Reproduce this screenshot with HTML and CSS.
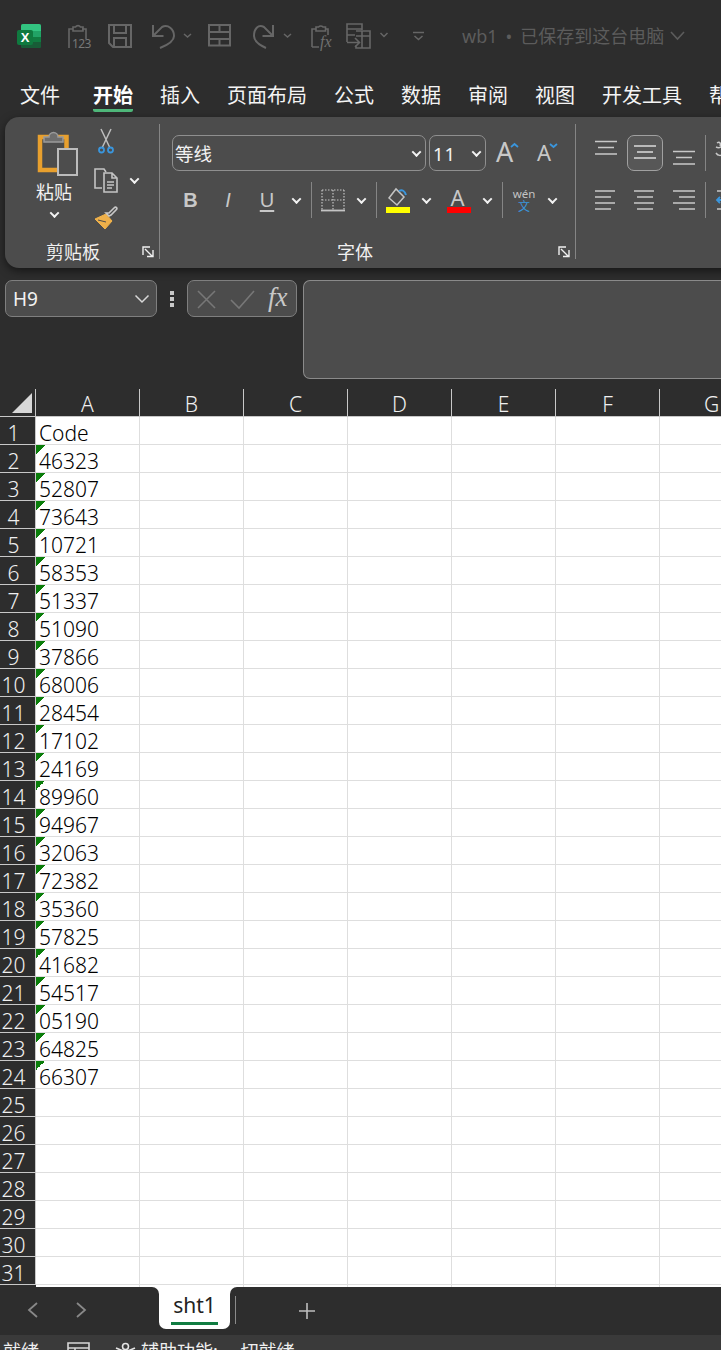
FILE: index.html
```html
<!DOCTYPE html>
<html lang="zh-CN">
<head>
<meta charset="utf-8">
<title>wb1 - Excel</title>
<link rel="stylesheet" href="styles.css">
</head>
<body>
<div class="app">
  <header class="titlebar">
    <svg class="qat" width="51" height="48" viewBox="17 12 51 48">
      <rect x="21" y="24" width="20" height="24" rx="2" fill="#107c41"/>
      <path d="M21 26a2 2 0 0 1 2-2h16a2 2 0 0 1 2 2v5H21z" fill="#33c481"/>
      <rect x="31" y="31" width="10" height="6" fill="#21a366"/>
      <path d="M21 42h20v4a2 2 0 0 1-2 2H23a2 2 0 0 1-2-2z" fill="#185c37"/>
      <rect x="17" y="30" width="16" height="15" rx="2" fill="#0f7a3f"/>
      <text x="25" y="42" class="logo-x">X</text>
    </svg>
    <svg class="qat" width="40" height="48" viewBox="68 12 40 48" fill="none" stroke="#666" stroke-width="1.6">
      <path d="M69 48V29h4M82 29h4v10M73 27h2.500a3 3 0 0 1 5 0h2.500v4H73z"/>
      <text x="72" y="48" class="qat-num">123</text>
    </svg>
    <svg class="qat" width="44" height="48" viewBox="108 12 44 48" fill="none" stroke="#666" stroke-width="2">
      <path d="M109 25h22v22h-18l-4-4zM114 25v8h12v-8M114 47v-9h12v9"/>
    </svg>
    <svg class="qat" width="56" height="48" viewBox="152 12 56 48" fill="none" stroke="#666" stroke-width="2">
      <path d="M153 25v11h10.500M153 36l9-9c6-3 12 2 12 9 0 4-4 8-14 12"/>
      <path d="M184 34l3.500 3 3.500-3" stroke-width="1.500"/>
    </svg>
    <svg class="qat" width="45" height="48" viewBox="208 12 45 48" fill="none" stroke="#666" stroke-width="2">
      <path d="M209 25h21v20.500h-21zM209 32h21M209 39h21M219.500 25v7M219.500 39v6.500"/>
    </svg>
    <svg class="qat" width="58" height="48" viewBox="253 12 58 48" fill="none" stroke="#666" stroke-width="2">
      <path d="M273 25v11h-10.500M273 36l-9-9c-6-3-10 2-10 9 0 4 3 8 12 12"/>
      <path d="M284 34l3.500 3 3.500-3" stroke-width="1.500"/>
    </svg>
    <svg class="qat" width="35" height="48" viewBox="311 12 35 48" fill="none" stroke="#666" stroke-width="1.600">
      <path d="M312 47V29h4M325 29h3v6M316 27h2.500a3 3 0 0 1 4.500 0h2.500v4h-9.500zM312 47h7"/>
      <text x="320" y="47" class="qat-fx">fx</text>
    </svg>
    <svg class="qat" width="59" height="48" viewBox="346 12 59 48" fill="none" stroke="#666" stroke-width="1.600">
      <path d="M362 30v-6h-15v18M347 29h15M347 35h8"/>
      <path d="M356 31h14v17h-14v-3M356 36h14M362 31v17M347 42.500h12M355 38l4.500 4.500-4.500 4.500"/>
      <path d="M380.500 33l3.500 3.500 3.500-3.500" stroke-width="1.500"/>
    </svg>
    <svg class="qat" width="57" height="48" viewBox="405 12 57 48" fill="none" stroke="#666" stroke-width="1.500">
      <path d="M413 32.500h11M414.500 36l4 3.500 4-3.500"/>
    </svg>
    <span class="doc-title">wb1<span class="doc-dot">•</span>已保存到这台电脑</span>
    <svg class="doc-chev" width="18" height="12" viewBox="0 0 18 12" fill="none" stroke="#5c5c5c" stroke-width="1.600"><path d="M2 2l6.500 7L15 2"/></svg>
  </header>

  <nav class="tabs">
    <span class="tab">文件</span>
    <span class="tab tab-active">开始</span>
    <span class="tab">插入</span>
    <span class="tab">页面布局</span>
    <span class="tab">公式</span>
    <span class="tab">数据</span>
    <span class="tab">审阅</span>
    <span class="tab">视图</span>
    <span class="tab">开发工具</span>
    <span class="tab">帮助</span>
  </nav>

  <section class="ribbon">
    <div class="group group-clip">
      <div class="clip-body">
        <div class="paste-col">
          <svg width="48" height="48" viewBox="30 128 48 48" fill="none">
            <path d="M66.500 148v-11H40v33h17" stroke="#e8a02e" stroke-width="4.500"/>
            <path d="M44 142v-5h5a4.500 4.500 0 0 1 9 0h5v5z" fill="#6e6e6e" stroke="#9a9a9a" stroke-width="1.500"/>
            <rect x="58" y="149" width="19" height="26" fill="#4d4d4d" stroke="#bcbcbc" stroke-width="2"/>
          </svg>
          <span class="paste-label">粘贴</span>
          <i class="chev chev-paste"></i>
        </div>
        <div class="clip-tools">
          <svg width="38" height="28" viewBox="88 128 38 28" fill="none">
            <path d="M102 148l9-19M110 148l-9-19" stroke="#bdbdbd" stroke-width="1.500"/>
            <circle cx="101.500" cy="150" r="2.500" stroke="#3a96dd" stroke-width="1.800"/>
            <circle cx="110.500" cy="150" r="2.500" stroke="#3a96dd" stroke-width="1.800"/>
          </svg>
          <div class="tool-row">
            <svg width="38" height="28" viewBox="88 166 38 28" fill="none" stroke="#c4c4c4" stroke-width="1.600">
              <path d="M102 188h-7v-19h9l2 3"/>
              <path d="M104 173h8l5 5v14h-13zM112 173v5h5M107 182h7M107 185h7M107 188h5"/>
            </svg>
            <i class="chev chev-copy"></i>
          </div>
          <svg width="38" height="28" viewBox="88 204 38 28" fill="none">
            <path d="M95 219l11-5 6 7-7 8z" fill="#eeb04a" stroke="#f0b24a" stroke-width="1"/>
            <path d="M98 220l8 2" stroke="#4c4c4c" stroke-width="1"/>
            <path d="M106 213l3 3 2-1 5-5c2-2 0-4-2-2l-5 5z" stroke="#c8c8c8" stroke-width="1.600"/>
          </svg>
        </div>
      </div>
      <div class="group-label label-clip">
        <span></span>
        <span>剪贴板</span>
        <svg class="launcher" width="12" height="12" viewBox="0 0 12 12" fill="none" stroke="#f0f0f0" stroke-width="1.400"><path d="M8 1H1v8M3 3l7 7M5 10.500h6V4"/></svg>
      </div>
    </div>
    <div class="group-sep"></div>

    <div class="group group-font">
      <div class="font-row">
        <div class="combo combo-name"><span>等线</span><i class="chev"></i></div>
        <div class="combo combo-size"><span>11</span><i class="chev"></i></div>
        <svg width="44" height="36" viewBox="486 135 44 36" fill="none">
          <text x="496" y="162" class="grow-a">A</text>
          <path d="M511 147l3.500-3 3.500 3" stroke="#3a96dd" stroke-width="1.800"/>
        </svg>
        <svg width="45" height="36" viewBox="530 135 45 36" fill="none">
          <text x="537" y="161" class="shrink-a">A</text>
          <path d="M550 144l3.500 3 3.500-3" stroke="#3a96dd" stroke-width="1.800"/>
        </svg>
      </div>
      <div class="font-row font-row-2">
        <span class="fmt w37 fmt-b">B</span>
        <span class="fmt w38 fmt-i">I</span>
        <span class="fmt w40 fmt-u">U</span>
        <span class="slot w18"><i class="chev"></i></span>
        <div class="mini-sep sep-l6"></div>
        <svg width="42" height="36" viewBox="312 182 42 36" fill="none" stroke="#c4c4c4">
          <path d="M322 190h22M322 200h22M322 190v20M333 190v20M344 190v20" stroke-width="1.200" stroke-dasharray="1.500 1.500"/>
          <path d="M321 210.500h24" stroke-width="1.800"/>
        </svg>
        <span class="slot w14"><i class="chev"></i></span>
        <div class="mini-sep sep-l8"></div>
        <svg width="42" height="36" viewBox="377 182 42 36" fill="none">
          <path d="M389 198l7-9 8 8-7 8z" stroke="#c4c4c4" stroke-width="1.500"/>
          <path d="M399 191c3-2 6 0 7 4" stroke="#3a96dd" stroke-width="2"/>
          <rect x="386" y="207" width="24" height="6" fill="#ffff00"/>
        </svg>
        <span class="slot w14"><i class="chev"></i></span>
        <svg width="47" height="36" viewBox="433 182 47 36" fill="none">
          <text x="450.500" y="206" class="color-a">A</text>
          <rect x="447" y="207" width="24" height="6" fill="#ff0000"/>
        </svg>
        <span class="slot w14"><i class="chev"></i></span>
        <div class="mini-sep sep-l8"></div>
        <div class="phon w42"><span class="phon-top">wén</span><span class="phon-bot">文</span></div>
        <span class="slot w14"><i class="chev"></i></span>
      </div>
      <div class="group-label label-font">
        <span></span>
        <span>字体</span>
        <svg class="launcher" width="12" height="12" viewBox="0 0 12 12" fill="none" stroke="#f0f0f0" stroke-width="1.400"><path d="M8 1H1v8M3 3l7 7M5 10.500h6V4"/></svg>
      </div>
    </div>
    <div class="group-sep"></div>

    <div class="group group-align">
      <div class="font-row">
        <svg width="51" height="36" viewBox="576 135 51 36" fill="none" stroke="#c8c8c8" stroke-width="1.600">
          <path d="M595 141.500h22M598 147.500h16M595 154h22"/>
        </svg>
        <div class="align-on">
          <svg width="34" height="34" viewBox="628 136 34 34" fill="none" stroke="#dcdcdc" stroke-width="1.600">
            <path d="M634 146h22M637 152h16M634 158h22"/>
          </svg>
        </div>
        <svg width="42" height="36" viewBox="663 135 42 36" fill="none" stroke="#c8c8c8" stroke-width="1.600">
          <path d="M673 151.500h22M676 157.500h16M673 164h22"/>
        </svg>
        <div class="mini-sep"></div>
        <svg width="20" height="36" viewBox="706 135 20 36" fill="none">
          <path d="M717 143c3-2 4 1 3 3M716 147c2 1 4 1 6-1M716 153c2 3 5 3 7 1" stroke="#c8c8c8" stroke-width="1.500"/>
        </svg>
      </div>
      <div class="font-row font-row-2">
        <svg width="39" height="36" viewBox="576 182 39 36" fill="none" stroke="#c8c8c8" stroke-width="1.600">
          <path d="M595 191h22M595 197h16M595 203h22M595 209h16"/>
        </svg>
        <svg width="39" height="36" viewBox="615 182 39 36" fill="none" stroke="#c8c8c8" stroke-width="1.600">
          <path d="M634 191h22M637 197h16M634 203h22M637 209h16"/>
        </svg>
        <svg width="51" height="36" viewBox="654 182 51 36" fill="none" stroke="#c8c8c8" stroke-width="1.600">
          <path d="M673 191h22M679 197h16M673 203h22M679 209h16"/>
        </svg>
        <div class="mini-sep"></div>
        <svg width="20" height="36" viewBox="706 182 20 36" fill="none">
          <path d="M722 200h-5M720 197l-3 3 3 3" stroke="#3a96dd" stroke-width="1.800"/>
          <path d="M717 191h6M717 209h6" stroke="#c8c8c8" stroke-width="1.600"/>
        </svg>
      </div>
    </div>
  </section>

  <section class="formula">
    <div class="namebox"><span>H9</span>
      <svg width="16" height="10" viewBox="0 0 16 10" fill="none" stroke="#d8d8d8" stroke-width="1.500"><path d="M1.500 1.500L8 8l6.500-6.500"/></svg>
    </div>
    <div class="grip"><i></i><i></i><i></i></div>
    <div class="fxbox">
      <svg width="108" height="35" viewBox="188 281 108 35" fill="none" stroke="#777" stroke-width="1.600">
        <path d="M198 291l17 17M215 291l-17 17M231 300l8 8 15-17"/>
        <text x="268" y="306" class="fx-text">fx</text>
      </svg>
    </div>
    <div class="formula-input"></div>
  </section>

  <main class="sheet">
    <div class="colheads">
      <div class="corner"><svg width="20" height="20" viewBox="0 0 20 20"><path d="M20 0v20H0z" fill="#d8d8d8"/></svg></div>
      <div class="colh">A</div><div class="colh">B</div><div class="colh">C</div><div class="colh">D</div><div class="colh">E</div><div class="colh">F</div><div class="colh">G</div>
    </div>
    <div class="row"><div class="rh">1</div><div class="cell">Code</div><div class="rest"></div></div>
    <div class="row"><div class="rh">2</div><div class="cell flag">46323</div><div class="rest"></div></div>
    <div class="row"><div class="rh">3</div><div class="cell flag">52807</div><div class="rest"></div></div>
    <div class="row"><div class="rh">4</div><div class="cell flag">73643</div><div class="rest"></div></div>
    <div class="row"><div class="rh">5</div><div class="cell flag">10721</div><div class="rest"></div></div>
    <div class="row"><div class="rh">6</div><div class="cell flag">58353</div><div class="rest"></div></div>
    <div class="row"><div class="rh">7</div><div class="cell flag">51337</div><div class="rest"></div></div>
    <div class="row"><div class="rh">8</div><div class="cell flag">51090</div><div class="rest"></div></div>
    <div class="row"><div class="rh">9</div><div class="cell flag">37866</div><div class="rest"></div></div>
    <div class="row"><div class="rh">10</div><div class="cell flag">68006</div><div class="rest"></div></div>
    <div class="row"><div class="rh">11</div><div class="cell flag">28454</div><div class="rest"></div></div>
    <div class="row"><div class="rh">12</div><div class="cell flag">17102</div><div class="rest"></div></div>
    <div class="row"><div class="rh">13</div><div class="cell flag">24169</div><div class="rest"></div></div>
    <div class="row"><div class="rh">14</div><div class="cell flag">89960</div><div class="rest"></div></div>
    <div class="row"><div class="rh">15</div><div class="cell flag">94967</div><div class="rest"></div></div>
    <div class="row"><div class="rh">16</div><div class="cell flag">32063</div><div class="rest"></div></div>
    <div class="row"><div class="rh">17</div><div class="cell flag">72382</div><div class="rest"></div></div>
    <div class="row"><div class="rh">18</div><div class="cell flag">35360</div><div class="rest"></div></div>
    <div class="row"><div class="rh">19</div><div class="cell flag">57825</div><div class="rest"></div></div>
    <div class="row"><div class="rh">20</div><div class="cell flag">41682</div><div class="rest"></div></div>
    <div class="row"><div class="rh">21</div><div class="cell flag">54517</div><div class="rest"></div></div>
    <div class="row"><div class="rh">22</div><div class="cell flag">05190</div><div class="rest"></div></div>
    <div class="row"><div class="rh">23</div><div class="cell flag">64825</div><div class="rest"></div></div>
    <div class="row"><div class="rh">24</div><div class="cell flag">66307</div><div class="rest"></div></div>
    <div class="row"><div class="rh">25</div><div class="cell"></div><div class="rest"></div></div>
    <div class="row"><div class="rh">26</div><div class="cell"></div><div class="rest"></div></div>
    <div class="row"><div class="rh">27</div><div class="cell"></div><div class="rest"></div></div>
    <div class="row"><div class="rh">28</div><div class="cell"></div><div class="rest"></div></div>
    <div class="row"><div class="rh">29</div><div class="cell"></div><div class="rest"></div></div>
    <div class="row"><div class="rh">30</div><div class="cell"></div><div class="rest"></div></div>
    <div class="row"><div class="rh">31</div><div class="cell"></div><div class="rest"></div></div>
    <div class="row-end"></div>
  </main>

  <section class="sheetbar">
    <div class="sheet-nav">
      <svg width="159" height="48" viewBox="0 1287 159 48" fill="none" stroke="#888" stroke-width="1.800">
        <path d="M37 1303l-8 7 8 7"/>
        <path d="M77 1303l8 7-8 7"/>
      </svg>
    </div>
    <div class="sheet-tab"><span>sht1</span></div>
    <div class="sheet-rest">
      <div class="tab-sep"></div>
      <svg width="18" height="18" viewBox="0 0 18 18" stroke="#bdbdbd" stroke-width="1.600"><path d="M1 9h16M9 1v16"/></svg>
    </div>
  </section>

  <footer class="status">
    <span>就绪</span>
    <svg class="st-form" width="23" height="20" viewBox="0 0 23 20" fill="none" stroke="#d8d8d8" stroke-width="1.600"><path d="M1 1h21v18H1zM1 6h21M8 6v13"/></svg>
    <svg class="st-acc" width="21" height="20" viewBox="0 0 21 20" fill="none" stroke="#e4e4e4" stroke-width="1.600"><circle cx="10.500" cy="4.500" r="3"/><path d="M1 6l6 2.500h7l6-2.500M7 8.500v6M14 8.500v6"/></svg>
    <span class="st-acc-text">辅助功能: 一切就绪</span>
  </footer>
</div>
</body>
</html>
```

FILE: styles.css
```css
* { box-sizing: border-box; }
html, body { margin: 0; padding: 0; }
body {
  width: 721px;
  height: 1350px;
  overflow: hidden;
  background: #2d2d2d;
  font-family: "Noto Sans", "Noto Sans CJK SC", sans-serif;
  color: #f2f2f2;
}
.app { display: flex; flex-direction: column; width: 721px; height: 1350px; overflow: hidden; }
svg { display: block; flex: none; overflow: hidden; }

/* title bar */
.titlebar { display: flex; align-items: center; flex: none; height: 72px; padding-left: 17px; white-space: nowrap; }
.logo-x { font: 700 13px "Liberation Sans", sans-serif; fill: #fff; stroke: none; text-anchor: middle; }
.qat-num { font: 400 12px "Noto Sans", sans-serif; fill: #777; stroke: none; letter-spacing: -0.6px; }
.qat-fx { font: italic 400 16px "Liberation Serif", serif; fill: #707070; stroke: none; }
.doc-title { font-size: 18px; color: #5c5c5c; line-height: 24px; }
.doc-dot { margin: 0 8px; }
.doc-chev { margin-left: 5px; }

/* tabs */
.tabs { display: flex; flex: none; gap: 27px; height: 45px; padding-left: 20px; white-space: nowrap; overflow: hidden; }
.tab { flex: none; height: 40px; padding-top: 10px; font-size: 20px; line-height: 28px; color: #f4f4f4; border-bottom: 3px solid transparent; }
.tab-active { margin-left: 6px; font-weight: 700; color: #fff; border-bottom-color: #4fb87a; border-radius: 0 0 2px 2px; }

/* ribbon */
.ribbon {
  display: flex;
  flex: none;
  height: 151px;
  width: 760px;
  margin-left: 5px;
  background: #4c4c4c;
  border-radius: 14px 0 0 14px;
  box-shadow: 0 3px 8px rgba(0, 0, 0, 0.5);
}
.group { display: flex; flex-direction: column; flex: none; }
.group-clip { width: 154px; padding-left: 25px; padding-top: 11px; }
.group-font { width: 415px; padding-left: 12px; padding-top: 18px; }
.group-align { width: 180px; padding-top: 18px; }
.group-sep { flex: none; width: 1px; margin: 7px 0 9px; background: #858585; }
.group-label {
  display: grid;
  align-items: center;
  margin-top: auto;
  height: 24px;
  margin-bottom: 4px;
  font-size: 18px;
  line-height: 24px;
  color: #f0f0f0;
}
.label-clip { grid-template-columns: 41px auto 1fr; margin-left: -25px; padding-right: 5px; }
.label-font { grid-template-columns: 165px auto 1fr; padding-right: 5px; }
.launcher { justify-self: end; }
.clip-body { display: flex; }
.paste-col { display: flex; flex-direction: column; align-items: center; width: 48px; }
.paste-label { margin-top: 4px; font-size: 18px; line-height: 24px; }
.clip-tools { display: flex; flex-direction: column; gap: 10px; margin-left: 10px; }
.tool-row { display: flex; align-items: center; }
.chev {
  display: block;
  flex: none;
  width: 7px;
  height: 7px;
  border-right: 2px solid #f2f2f2;
  border-bottom: 2px solid #f2f2f2;
  transform: rotate(45deg) translate(-1px, -1px);
}
.chev-paste { margin-top: 7px; }
.chev-copy { margin-left: 5px; }

/* font + alignment */
.font-row { display: flex; align-items: center; height: 36px; }
.font-row-2 { margin-top: 11px; }
.combo {
  display: flex;
  align-items: center;
  justify-content: space-between;
  flex: none;
  height: 36px;
  padding: 0 5px 0 2px;
  border: 1px solid #8f8f8f;
  border-radius: 7px;
  font-size: 18.500px;
}
.combo-name { width: 254px; }
.combo-size { width: 57px; margin-left: 3px; padding-left: 3px; letter-spacing: 1px; }
.grow-a { font: 400 27px "Noto Sans", sans-serif; fill: #c8c8c8; }
.shrink-a { font: 400 22px "Noto Sans", sans-serif; fill: #c8c8c8; }
.color-a { font: 400 22px "Noto Sans", sans-serif; fill: #c8c8c8; }
.fmt { display: block; flex: none; text-align: center; font-size: 20px; line-height: 24px; color: #c8c8c8; }
.fmt-b { font-family: "Liberation Sans", sans-serif; font-weight: 700; }
.fmt-i { font-family: "Liberation Sans", sans-serif; font-style: italic; }
.fmt-u { font-family: "Liberation Sans", sans-serif; text-decoration: underline; text-underline-offset: 3px; }
.slot { display: flex; justify-content: center; align-items: center; flex: none; height: 24px; }
.w14 { width: 14px; }
.w18 { width: 18px; }
.w37 { width: 37px; }
.w38 { width: 38px; }
.w40 { width: 40px; }
.w42 { width: 42px; }
.mini-sep { flex: none; width: 1px; height: 36px; background: #858585; }
.sep-l6 { margin-left: 6px; }
.sep-l8 { margin-left: 8px; }
.phon { display: flex; flex-direction: column; align-items: center; flex: none; line-height: 13px; }
.phon-top { font-size: 11.500px; color: #c4c4c4; }
.phon-bot { font-size: 12px; color: #3a96dd; }
.align-on { flex: none; width: 36px; height: 36px; border: 1px solid #a0a0a0; border-radius: 7px; background: #575757; }

/* formula bar */
.formula { display: flex; flex: none; height: 99px; margin-top: 12px; padding-left: 5px; }
.namebox {
  display: flex;
  align-items: center;
  justify-content: space-between;
  flex: none;
  width: 152px;
  height: 37px;
  padding: 0 6px 0 7px;
  background: #4c4c4c;
  border: 1px solid #7f7f7f;
  border-radius: 7px;
  font-size: 19px;
}
.grip { display: flex; flex-direction: column; flex: none; gap: 2px; width: 30px; height: 37px; padding: 11px 0 0 13px; }
.grip i { display: block; width: 4px; height: 4px; background: #c8c8c8; }
.fxbox { flex: none; width: 110px; height: 37px; background: #4c4c4c; border: 1px solid #7f7f7f; border-radius: 7px; }
.fx-text { font: italic 400 27px "Liberation Serif", serif; fill: #c8c8c8; stroke: none; }
.formula-input {
  flex: none;
  width: 440px;
  margin-left: 6px;
  background: #4c4c4c;
  border: 1px solid #8a8a8a;
  border-right: 0;
  border-radius: 7px 0 0 7px;
}

/* grid */
.sheet { flex: none; margin-top: 10px; overflow: hidden; }
.colheads { display: flex; height: 28px; border-bottom: 1px solid #c8c8c8; }
.corner { flex: none; width: 36px; padding: 4px 0 0 12px; border-right: 1px solid #c8c8c8; }
.colh {
  flex: none;
  width: 104px;
  border-right: 1px solid #c8c8c8;
  font-size: 21px;
  font-weight: 300;
  line-height: 30px;
  text-align: center;
  color: #f0f0f0;
}
.row { display: flex; height: 28px; background: #fff; }
.row-end { height: 2px; margin-left: 36px; background: repeating-linear-gradient(90deg, #fff 0 103px, #dedede 103px 104px); }
.rh {
  flex: none;
  width: 36px;
  padding-right: 8px;
  background: #2d2d2d;
  border-right: 1px solid #c8c8c8;
  border-bottom: 1px solid #c8c8c8;
  font-size: 21px;
  font-weight: 300;
  line-height: 32px;
  text-align: center;
  color: #f0f0f0;
  overflow: hidden;
}
.cell {
  flex: none;
  width: 104px;
  padding-left: 3px;
  border-right: 1px solid #dedede;
  border-bottom: 1px solid #dedede;
  font-size: 21px;
  font-weight: 300;
  line-height: 32px;
  color: #000;
  overflow: hidden;
}
.flag { background: linear-gradient(135deg, #0a7d0a 0 50%, transparent 50%) 0 0 / 9px 9px no-repeat; }
.rest {
  flex: 1;
  border-bottom: 1px solid #dedede;
  background: repeating-linear-gradient(90deg, #fff 0 103px, #dedede 103px 104px);
}

/* sheet tabs + status */
.sheetbar { display: flex; flex: none; height: 48px; background: linear-gradient(#fff 0 10px, #2d2d2d 10px); }
.sheet-nav { flex: none; width: 159px; background: #2d2d2d; border-top-right-radius: 7px; overflow: hidden; }
.sheet-tab {
  flex: none;
  width: 71px;
  height: 42px;
  padding: 4px 12px 0;
  background: #fff;
  border-radius: 0 0 7px 7px;
}
.sheet-tab span {
  display: block;
  height: 34px;
  font-size: 21px;
  line-height: 29px;
  text-align: center;
  color: #222;
  border-bottom: 3px solid #107c41;
}
.sheet-rest { display: flex; align-items: center; flex: 1; padding-left: 5px; background: #2d2d2d; border-top-left-radius: 7px; }
.tab-sep { width: 1px; height: 28px; background: #8a8a8a; margin-top: -2px; }
.sheet-rest svg { margin-left: 62px; }
.status { display: flex; flex: none; height: 15px; padding: 4px 0 0 3px; background: #3a3a3a; font-size: 18px; line-height: 24px; color: #f0f0f0; white-space: nowrap; overflow: hidden; }
.st-form { margin: 3px 0 0 28px; }
.st-acc { margin: 3px 0 0 25px; }
.st-acc-text { margin-left: 5px; }
```
